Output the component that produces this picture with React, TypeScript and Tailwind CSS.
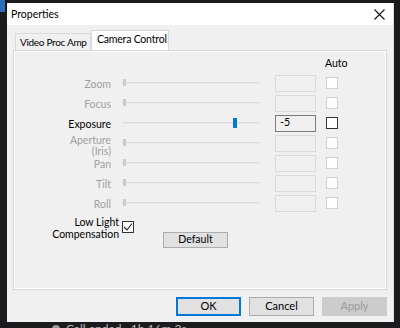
import React from "react";

const font = { fontFamily: "Lato, 'Noto Sans', sans-serif" };

function Slider({ enabled, pos }: { enabled?: boolean; pos?: number }) {
  return (
    <div className="relative ml-[10px] h-[12px] w-[138px] shrink-0">
      <div className="absolute left-0 right-0 top-[5px] h-[2px] bg-[#dcdcdc] border-b border-[#e9e9e9]" />
      {enabled ? (
        <div
          className="absolute top-[1px] h-[10px] w-[4px] bg-[#0078d7]"
          style={{ left: `${pos ?? 0}px` }}
        />
      ) : (
        <div className="absolute left-[1px] top-[2px] h-[7px] w-[3px] bg-[#cbcbcb]" />
      )}
    </div>
  );
}

function Row({
  label,
  enabled,
  value,
  pos,
  twoLine,
}: {
  label: React.ReactNode;
  enabled?: boolean;
  value?: string;
  pos?: number;
  twoLine?: boolean;
}) {
  return (
    <div className="flex h-[20px] items-center">
      <div
        className={`w-[98px] shrink-0 whitespace-nowrap pr-[1px] text-right text-[10.5px] ${
          twoLine ? "leading-[11px] mt-[5px]" : "leading-[12px] mt-[1px]"
        } ${enabled ? "text-black" : "text-[#a0a0a0]"}`}
      >
        {label}
      </div>
      <Slider enabled={enabled} pos={pos} />
      <div
        className={`ml-[15px] flex h-[17px] w-[41px] shrink-0 items-center pl-[4px] text-[10.5px] text-black ${
          enabled ? "border border-[#7a7a7a] bg-[#f0f0f0]" : "border border-[#dadada] bg-[#f0f0f0]"
        }`}
      >
        {value}
      </div>
      <div
        className={`ml-[10px] h-[12px] w-[12px] shrink-0 bg-white ${
          enabled ? "border border-[#333333]" : "border border-[#d2d2d2]"
        }`}
      />
    </div>
  );
}

function Btn({
  children,
  variant,
}: {
  children: React.ReactNode;
  variant: "ok" | "normal" | "disabled";
}) {
  const cls =
    variant === "ok"
      ? "border-2 border-[#0078d7] bg-[#e1e1e1] text-black"
      : variant === "normal"
      ? "border border-[#adadad] bg-[#e1e1e1] text-black"
      : "border border-[#cccccc] bg-[#cccccc] text-[#9a9a9a]";
  return (
    <div
      className={`flex h-[19px] w-[65px] items-center justify-center text-[11px] ${cls}`}
    >
      {children}
    </div>
  );
}

export default function App() {
  return (
    <div
      className="relative h-[328px] w-[400px] overflow-hidden bg-[#1b1b1d]"
      style={font}
    >
      <div className="flex">
        <div className="w-[7px] shrink-0 flex flex-col">
          <div className="h-[12px] w-[5px] bg-[#2a6fb8]" />
        </div>
        <div className="mt-[3px] h-[319px] w-[387px] shrink-0 bg-[#f0f0f0] border-r border-[#dcdcdc]">
          {/* title bar */}
          <div className="flex h-[22px] items-center justify-between bg-white pl-[4px] pr-[8px]">
            <span className="text-[10.5px] leading-none text-black">Properties</span>
            <svg width="11" height="11" viewBox="0 0 11 11">
              <path d="M0.5 0.5 L10.5 10.5 M10.5 0.5 L0.5 10.5" stroke="#111" strokeWidth="1.1" />
            </svg>
          </div>
          {/* body */}
          <div className="px-[6px] pt-[6px]">
            {/* tabs */}
            <div className="flex h-[19px] items-end">
              <div className="ml-[2px] flex h-[17px] w-[76px] items-center overflow-hidden whitespace-nowrap border border-b-0 border-[#d9d9d9] bg-[#f0f0f0] pl-[4px] text-[10px] tracking-[-0.3px] text-black">
                Video Proc Amp
              </div>
              <div className="flex h-[20px] w-[78px] items-center whitespace-nowrap border border-b-0 border-[#d9d9d9] bg-white pl-[5px] pb-[2px] text-[10.5px] tracking-[-0.2px] text-black">
                Camera Control
              </div>
            </div>
            {/* panel */}
            <div className="h-[240px] border border-[#d9d9d9] bg-[#f0f0f0] shadow-[inset_0_0_0_1px_#ffffff]">
              <div className="pt-[6px]">
                <div className="mb-[2px] flex h-[14px] items-center pl-[311px] text-[10.5px] text-black">
                  Auto
                </div>
                <Row label="Zoom" />
                <Row label="Focus" />
                <Row label="Exposure" enabled value="-5" pos={111} />
                <Row
                  twoLine
                  label={
                    <>
                      Aperture
                      <br />
                      (Iris)
                    </>
                  }
                />
                <Row label="Pan" />
                <Row label="Tilt" />
                <Row label="Roll" />
                <div className="mt-[3px] flex items-start">
                  <div className="w-[106px] shrink-0 whitespace-nowrap pr-[1px] text-right text-[10.5px] leading-[12px] text-black">
                    Low Light
                    <br />
                    Compensation
                  </div>
                  <div className="ml-[2px] mt-[5px] flex h-[12px] w-[12px] shrink-0 items-center justify-center border border-[#333333] bg-white">
                    <svg width="10" height="10" viewBox="0 0 10 10">
                      <path d="M1 5 L4 8 L9 1.5" fill="none" stroke="#222" strokeWidth="1.1" />
                    </svg>
                  </div>
                  <div className="ml-[29px] mt-[16px] flex h-[16px] w-[65px] shrink-0 items-center justify-center border border-[#adadad] bg-[#e1e1e1] text-[10.5px] text-black">
                    Default
                  </div>
                </div>
              </div>
            </div>
            {/* buttons */}
            <div className="mt-[7px] flex justify-end gap-[8px]">
              <Btn variant="ok">OK</Btn>
              <Btn variant="normal">Cancel</Btn>
              <Btn variant="disabled">Apply</Btn>
            </div>
          </div>
        </div>
      </div>
      <div className="flex items-center pl-[52px] pt-[1px] text-[12px] leading-[12px] text-[#b9b9b9]">
        <div className="mr-[6px] h-[8px] w-[8px] rounded-full bg-[#9a9a9a]" />
        Call ended · 1h 16m 2s
      </div>
    </div>
  );
}
